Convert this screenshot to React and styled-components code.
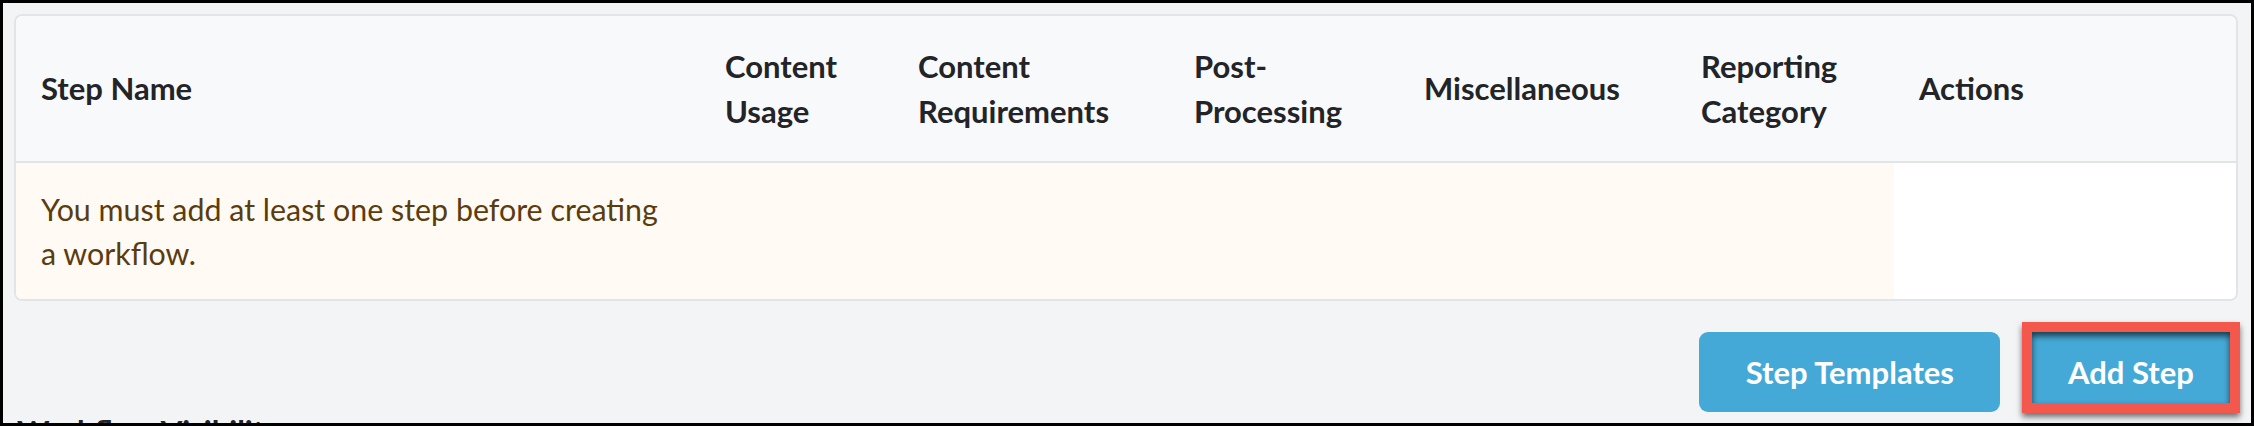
import React from 'react'
import styled, { createGlobalStyle } from 'styled-components'

const GlobalStyle = createGlobalStyle`
  html, body {
    margin: 0;
    padding: 0;
    background: #000;
  }
  body {
    font-family: Lato, "Noto Sans", sans-serif;
  }
`;

const Frame = styled.div`
  width: 2254px;
  height: 426px;
  box-sizing: border-box;
  border: 3px solid #000;
  background: #f3f4f6;
  padding: 11px 11px 0 11px;
  overflow: hidden;
`;

const Card = styled.div`
  margin-right: 2px;
  border: 2px solid #e3e4e7;
  border-radius: 8px;
  background: #fff;
  overflow: hidden;
`;

const Table = styled.table`
  width: 100%;
  table-layout: fixed;
  border-collapse: separate;
  border-spacing: 0;
  font-size: 31px;
  line-height: 1.43;
`;

const HeadRow = styled.tr`
  height: 147px;
  background: #f8f9fb;
`;

const HeadCell = styled.th`
  text-align: left;
  font-weight: 700;
  color: #222427;
  padding: 0 25px;
  vertical-align: middle;
  border-bottom: 2px solid #e3e4e7;
`;

const BodyRow = styled.tr`
  height: 136px;
`;

const BodyCell = styled.td`
  padding: 0 25px;
  vertical-align: middle;
  font-size: 30.4px;
  line-height: 44px;
  background: ${props => props.$warning ? '#fffaf3' : '#fff'};
  color: #5a3c0f;
`;

const Footer = styled.div`
  display: flex;
  justify-content: flex-end;
  align-items: flex-start;
  gap: 22px;
  margin-top: 21px;
`;

const Button = styled.button`
  font-family: inherit;
  font-size: 31px;
  font-weight: 700;
  color: #fff;
  background: #45a9d7;
  border: none;
  border-radius: 9px;
  height: 80px;
  padding: 0 46px 0 47px;
  margin-top: 10px;
  cursor: pointer;
`;

const HighlightedButton = styled(Button)`
  box-sizing: border-box;
  margin-top: 0;
  width: 218px;
  height: 91px;
  padding: 9px 0 0;
  border: 10px solid #f4574b;
  border-radius: 0;
  box-shadow: 0 4px 6px rgba(0, 0, 0, 0.55), inset 0 4px 6px rgba(0, 0, 0, 0.65);
`;

const SectionTitle = styled.h3`
  margin: 3px 0 0 3px;
  font-size: 31px;
  font-weight: 700;
  line-height: 1;
  color: #222427;
`;

const columns = [
  { key: 'name', width: 684, label: ['Step Name'] },
  { key: 'usage', width: 193, label: ['Content', 'Usage'] },
  { key: 'req', width: 276, label: ['Content', 'Requirements'] },
  { key: 'post', width: 230, label: ['Post-', 'Processing'] },
  { key: 'misc', width: 277, label: ['Miscellaneous'] },
  { key: 'report', width: 218, label: ['Reporting', 'Category'] },
  { key: 'actions', width: 342, label: ['Actions'] },
];

class App extends React.Component {
  render() {
    return (
      <Frame>
        <GlobalStyle />
        <Card>
          <Table>
            <colgroup>
              {columns.map(col => (
                <col key={col.key} style={{ width: col.width }} />
              ))}
            </colgroup>
            <thead>
              <HeadRow>
                {columns.map(col => (
                  <HeadCell key={col.key}>
                    {col.label.map((line, i) => (
                      <React.Fragment key={i}>
                        {i > 0 && <br />}
                        {line}
                      </React.Fragment>
                    ))}
                  </HeadCell>
                ))}
              </HeadRow>
            </thead>
            <tbody>
              {this.renderEmptyRow()}
            </tbody>
          </Table>
        </Card>
        <Footer>
          <Button>Step Templates</Button>
          <HighlightedButton>Add Step</HighlightedButton>
        </Footer>
        <SectionTitle>Workflow Visibility</SectionTitle>
      </Frame>
    )
  }

  renderEmptyRow() {
    let cells = [];
    for (let i = 0; i < columns.length; i++) {
      const isActions = columns[i].key === 'actions';
      cells.push(
        <BodyCell $warning={!isActions} key={columns[i].key}>
          {i === 0 && 'You must add at least one step before creating a workflow.'}
        </BodyCell>
      )
    }
    return <BodyRow>{cells}</BodyRow>;
  }
}

export default App
